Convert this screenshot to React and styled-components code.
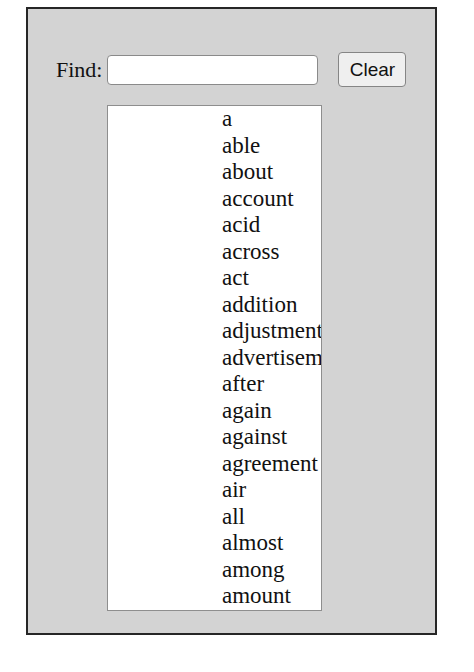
import styled, { createGlobalStyle } from 'styled-components'

const words = [
  'a',
  'able',
  'about',
  'account',
  'acid',
  'across',
  'act',
  'addition',
  'adjustment',
  'advertisement',
  'after',
  'again',
  'against',
  'agreement',
  'air',
  'all',
  'almost',
  'among',
  'amount',
]

const GlobalStyle = createGlobalStyle`
  html, body {
    margin: 0;
    padding: 0;
    background: #ffffff;
  }
  body {
    font-family: "Liberation Serif", "Times New Roman", serif;
  }
`

const App = () => {
  return (
    <>
      <GlobalStyle />
      <Page>
        <Panel>
          <FindRow>
            <Label htmlFor='find'>Find:</Label>
            <SearchInput id='find' type='text' />
            <ClearButton type='button'>Clear</ClearButton>
          </FindRow>
          <WordList>
            {words.map((word) => (
              <Word key={word}>{word}</Word>
            ))}
          </WordList>
        </Panel>
      </Page>
    </>
  )
}
export default App

const Page = styled.div`
  padding: 7px 0 0 26px;
`

const Panel = styled.div`
  box-sizing: border-box;
  width: 411px;
  background: #d3d3d3;
  border: 2px solid #262626;
  padding: 43px 0 22px 0;
`

const FindRow = styled.div`
  display: flex;
  align-items: center;
  height: 35px;
  padding-left: 28px;
`

const Label = styled.label`
  font-family: "Liberation Serif", "Times New Roman", serif;
  font-size: 22px;
  color: #111;
  margin-right: 5px;
`

const SearchInput = styled.input`
  box-sizing: border-box;
  width: 211px;
  height: 30px;
  border: 1px solid #8a8a8a;
  border-radius: 4px;
  background: #fff;
  padding: 0 6px;
  font-size: 18px;
  outline: none;
`

const ClearButton = styled.button`
  box-sizing: border-box;
  margin-left: 20px;
  width: 68px;
  height: 35px;
  border: 1px solid #858585;
  border-radius: 4px;
  background: #efefef;
  font-family: "Liberation Sans", Arial, sans-serif;
  font-size: 19px;
  color: #111;
  padding: 0;
`

const WordList = styled.div`
  box-sizing: border-box;
  width: 215px;
  margin: 18px 0 0 79px;
  border: 1px solid #8e8e8e;
  background: #fff;
  overflow: hidden;
  padding-left: 114px;
`

const Word = styled.div`
  font-family: "Liberation Serif", "Times New Roman", serif;
  font-size: 23px;
  line-height: 26.5px;
  color: #111;
  white-space: nowrap;
`
